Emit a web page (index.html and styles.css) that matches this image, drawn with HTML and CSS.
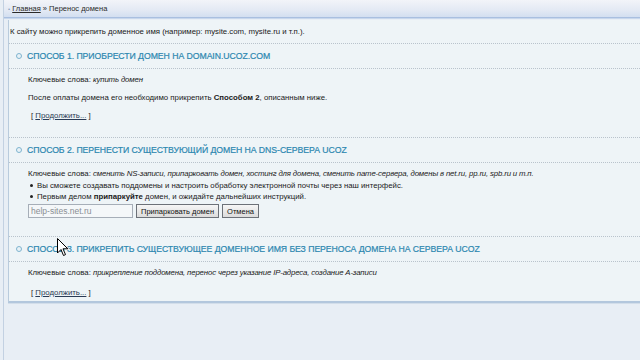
FILE: index.html
```html
<!DOCTYPE html>
<html lang="ru">
<head>
<meta charset="utf-8">
<title>Перенос домена</title>
<link rel="stylesheet" href="styles.css">
</head>
<body>
<div class="page">
  <div class="crumbs"><span class="dot">•</span> <a href="#">Главная</a> » Перенос домена</div>
  <div class="panel">
    <p class="intro">К сайту можно прикрепить доменное имя (например: mysite.com, mysite.ru и т.п.).</p>

    <div class="sec">
      <h2 class="head"><span class="ring"></span>Способ 1. Приобрести домен на domain.ucoz.com</h2>
      <div class="body">
        <p class="line">Ключевые слова: <i>купить домен</i></p>
        <p class="line gap">После оплаты домена его необходимо прикрепить <b>Способом 2</b>, описанным ниже.</p>
        <p class="line gap more">[ <a href="#">Продолжить...</a> ]</p>
      </div>
    </div>

    <div class="sec">
      <h2 class="head"><span class="ring"></span>Способ 2. Перенести существующий домен на DNS-сервера uCoz</h2>
      <div class="body body2">
        <p class="line">Ключевые слова: <i>сменить NS-записи, припарковать домен, хостинг для домена, сменить name-сервера, домены в net.ru, pp.ru, spb.ru и т.п.</i></p>
        <ul class="list">
          <li><span>Вы сможете создавать поддомены и настроить обработку электронной почты через наш интерфейс.</span></li>
          <li><span>Первым делом <b>припаркуйте</b> домен, и ожидайте дальнейших инструкций.</span></li>
        </ul>
        <div class="form">
          <input class="field" type="text" value="help-sites.net.ru">
          <button class="btn" type="button">Припарковать домен</button>
          <button class="btn" type="button">Отмена</button>
        </div>
      </div>
    </div>

    <div class="sec last">
      <h2 class="head"><span class="ring"></span>Способ 3. Прикрепить существующее доменное имя без переноса домена на сервера uCoz</h2>
      <div class="body body3">
        <p class="line">Ключевые слова: <i>прикрепление поддомена, перенос через указание IP-адреса, создание A-записи</i></p>
        <p class="line gap2 more">[ <a href="#">Продолжить...</a> ]</p>
      </div>
    </div>
  </div>
</div>
<svg class="cursor" width="12" height="19" viewBox="0 0 12 19"><path d="M0.5 0.5 L0.5 15 L4 11.5 L6.5 17.5 L8.5 16.6 L6 10.8 L10.8 10.8 Z" fill="#fff" stroke="#000" stroke-width="1"/></svg>
</body>
</html>
```

FILE: styles.css
```css
html, body {
  margin: 0;
  padding: 0;
}
body {
  background: #e8eef5;
  font-family: "Liberation Sans", Arial, sans-serif;
  font-size: 7.8px;
  color: #1a1a1a;
  width: 640px;
  height: 360px;
  overflow: hidden;
  position: relative;
}
.page {
  margin-left: 3px;
  border-left: 1px solid #c3d1e2;
  min-height: 360px;
}
.crumbs {
  height: 17px;
  line-height: 17px;
  padding-left: 4px;
  background: linear-gradient(#f2f4f9, #e3e9f4 60%, #d3dff0);
  border-bottom: 1px solid #a9bfe0;
  box-shadow: 0 1px 0 #c8d7ec;
  color: #2a2a2a;
  font-size: 7.5px;
}
.crumbs a { color: #2a2a2a; }
.crumbs .dot { color: #8aa2c0; font-size: 6px; }
.panel {
  margin: 2px 0 0 4px;
  background: #eef4f7;
  border-left: 1px solid #b9cbdd;
  border-bottom: 2px solid #b3c7dd;
  box-shadow: 0 1px 0 #d3deea;
  padding-bottom: 2px;
}
p { margin: 0; }
i { letter-spacing: -0.15px; }
.intro {
  padding: 6px 0 5px 1px;
  line-height: 12px;
  border-bottom: 1px dotted #b9c3cc;
}
.sec {
  border-bottom: 1px dotted #b9c3cc;
}
.sec.last { border-bottom: none; }
.head {
  margin: 0;
  height: 24px;
  line-height: 24px;
  padding-left: 7px;
  border-bottom: 1px dotted #b9c3cc;
  font-size: 8.7px;
  font-weight: normal;
  text-transform: uppercase;
  color: #2c87b0;
  letter-spacing: -0.05px;
  display: flex;
  align-items: center;
  gap: 5px;
  -webkit-text-stroke: 0.2px #2c87b0;
}
.ring {
  width: 4px;
  height: 4px;
  border: 1.5px solid #7fb4cf;
  border-radius: 50%;
  background: #e8f2f7;
  -webkit-text-stroke: 0;
}
.body {
  padding: 5px 0 15px 19px;
}
.line { line-height: 12px; }
.gap { margin-top: 6px; }
.gap2 { margin-top: 8px; }
.more { padding-left: 3px; }
.more a { color: #2a3b55; }
.body2 { padding-bottom: 18px; }
.body3 { padding-bottom: 0; }
.list {
  list-style: none;
  margin: 0;
  padding: 0 0 0 2px;
}
.list li {
  line-height: 11px;
  display: flex;
  align-items: center;
  gap: 4px;
}
.list li::before {
  content: "";
  width: 3px;
  height: 3px;
  border-radius: 50%;
  background: #222;
  flex: none;
}
.form {
  margin-top: 2px;
  display: flex;
  gap: 3px;
  align-items: center;
}
.field {
  width: 105px;
  height: 14px;
  box-sizing: border-box;
  border: 1px solid #a6aeb8;
  background: #f4f7f9;
  font-family: "Liberation Sans", Arial, sans-serif;
  font-size: 8.5px;
  color: #8a8f94;
  padding: 0 2px;
  margin: 0;
}
.btn {
  height: 14px;
  box-sizing: border-box;
  border: 1px solid #6c7178;
  background: linear-gradient(#f6f6f6, #dcdcdc);
  font-family: "Liberation Sans", Arial, sans-serif;
  font-size: 7.5px;
  color: #111;
  padding: 0 4px;
  margin: 0;
}
.cursor {
  position: absolute;
  left: 57px;
  top: 238px;
}
```
